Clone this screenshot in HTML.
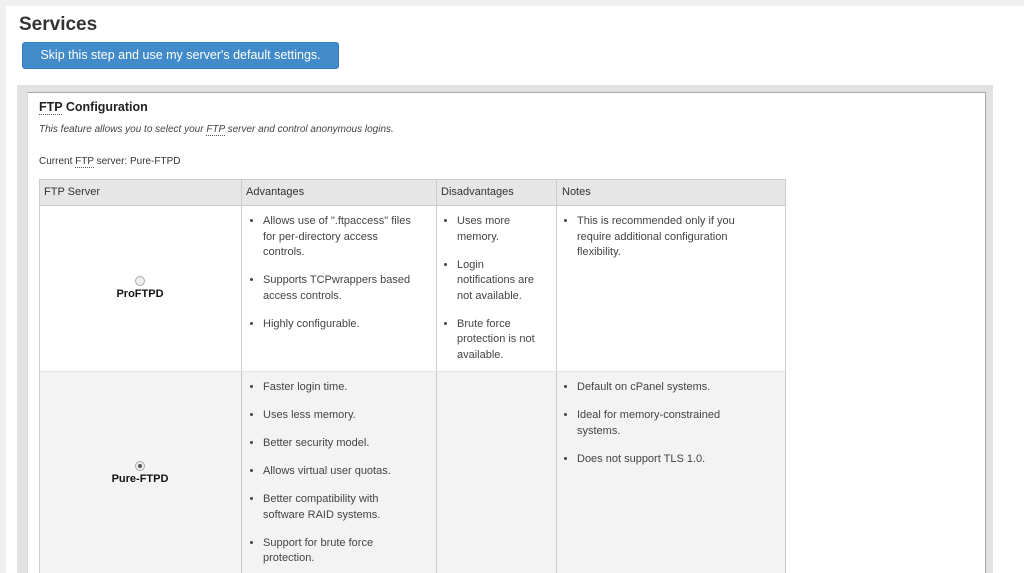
<!DOCTYPE html>
<html style="width:1024px;height:573px;overflow:hidden"><head><meta charset="utf-8"><style>
*{margin:0;padding:0;box-sizing:border-box}
body{width:1024px;height:573px;overflow:hidden;background:#f0f0f0;font-family:"Liberation Sans",sans-serif;color:#333;position:relative}
.main{position:absolute;left:6px;top:6px;width:1018px;height:567px;background:#fff}
.a{position:absolute}
h1{position:absolute;left:19px;top:14px;font-size:19px;font-weight:bold;color:#333}
.btn{position:absolute;left:22px;top:42px;width:317px;height:27px;background:#428bca;border:1px solid #357ebd;border-radius:3px;color:#fff;font-size:12.5px;line-height:25px;text-align:center}
.outer{position:absolute;left:17px;top:85px;width:976px;height:488px;background:#e2e2e2}
.inner{position:absolute;left:27px;top:92px;width:959px;height:481px;background:#fff;border-top:1px solid #aaa;border-right:1px solid #aaa;border-left:1px solid #ddd}
.ab{border-bottom:1px dotted #555}
.t{font-size:11px;line-height:15.5px}
ul{list-style:disc;padding-left:20px;font-size:11px;line-height:15.5px;color:#444}
li{margin-bottom:12.5px}
</style></head><body>
<div class="main"></div>
<h1>Services</h1>
<div class="btn">Skip this step and use my server's default settings.</div>
<div class="outer"></div>
<div class="inner"></div>
<div class="a" style="left:39px;top:100px;font-size:12.5px;font-weight:bold;color:#222"><span class="ab">FTP</span> Configuration</div>
<div class="a t" style="left:39px;top:122px;font-style:italic;font-size:10px;color:#444">This feature allows you to select your <span class="ab">FTP</span> server and control anonymous logins.</div>
<div class="a t" style="left:39px;top:154px;font-size:10px;color:#333">Current <span class="ab">FTP</span> server: Pure-FTPD</div>

<div class="a" style="left:39px;top:179px;width:747px;height:394px;border:1px solid #ccc;border-bottom:none"></div>
<div class="a" style="left:40px;top:180px;width:745px;height:26px;background:#e6e6e6;border-bottom:1px solid #ccc"></div>
<div class="a" style="left:40px;top:372px;width:745px;height:201px;background:#f3f3f3"></div>
<div class="a" style="left:241px;top:180px;width:1px;height:393px;background:#ccc"></div>
<div class="a" style="left:436px;top:180px;width:1px;height:393px;background:#ccc"></div>
<div class="a" style="left:556px;top:180px;width:1px;height:393px;background:#ccc"></div>
<div class="a" style="left:40px;top:371px;width:745px;height:1px;background:#e2e2e2"></div>

<div class="a t" style="left:44px;top:185px">FTP Server</div>
<div class="a t" style="left:246px;top:185px">Advantages</div>
<div class="a t" style="left:441px;top:185px">Disadvantages</div>
<div class="a t" style="left:562px;top:185px">Notes</div>

<div class="a" style="left:135px;top:276px;width:10px;height:10px;border:1px solid #aaa;border-radius:50%;background:#eee"></div>
<div class="a" style="left:100px;top:288px;width:80px;text-align:center;font-size:11px;font-weight:bold;color:#111">ProFTPD</div>
<div class="a" style="left:135px;top:461px;width:10px;height:10px;border:1px solid #aaa;border-radius:50%;background:#eee"><div style="margin:2px;width:4px;height:4px;border-radius:50%;background:#555"></div></div>
<div class="a" style="left:95px;top:473px;width:90px;text-align:center;font-size:11px;font-weight:bold;color:#111">Pure-FTPD</div>

<ul class="a" style="left:243px;top:214px;width:190px">
<li>Allows use of ".ftpaccess" files<br>for per-directory access<br>controls.</li>
<li>Supports TCPwrappers based<br>access controls.</li>
<li>Highly configurable.</li></ul>
<ul class="a" style="left:437px;top:214px;width:118px">
<li>Uses more<br>memory.</li>
<li>Login<br>notifications are<br>not available.</li>
<li>Brute force<br>protection is not<br>available.</li></ul>
<ul class="a" style="left:557px;top:214px;width:226px">
<li>This is recommended only if you<br>require additional configuration<br>flexibility.</li></ul>

<ul class="a" style="left:243px;top:380px;width:190px">
<li>Faster login time.</li>
<li>Uses less memory.</li>
<li>Better security model.</li>
<li>Allows virtual user quotas.</li>
<li>Better compatibility with<br>software RAID systems.</li>
<li>Support for brute force<br>protection.</li></ul>
<ul class="a" style="left:557px;top:380px;width:226px">
<li>Default on cPanel systems.</li>
<li>Ideal for memory-constrained<br>systems.</li>
<li>Does not support TLS 1.0.</li></ul>
</body></html>
